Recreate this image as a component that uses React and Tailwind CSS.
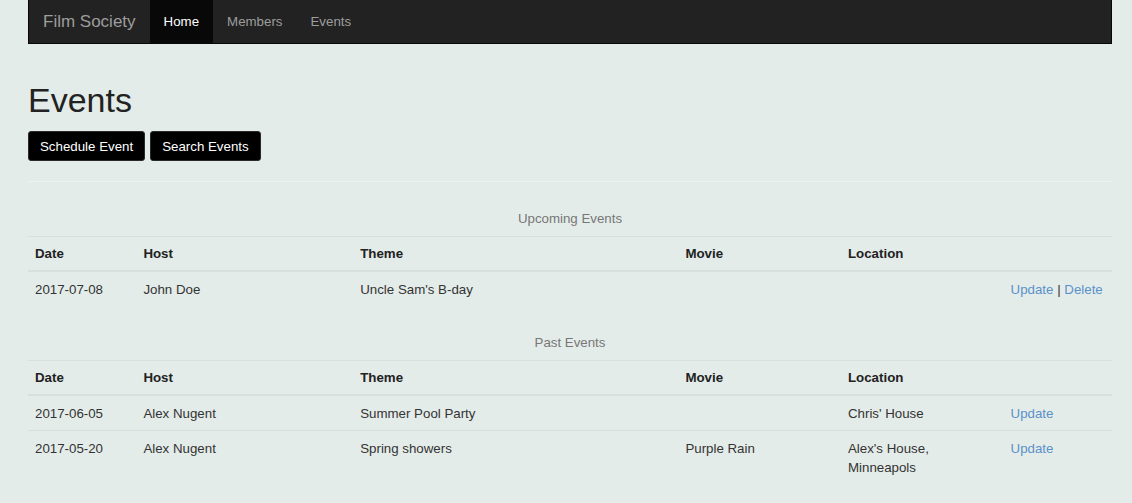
import React from "react";

const upcoming = [
  { date: "2017-07-08", host: "John Doe", theme: "Uncle Sam's B-day", movie: "", location: "", del: true },
];

const past = [
  { date: "2017-06-05", host: "Alex Nugent", theme: "Summer Pool Party", movie: "", location: "Chris' House" },
  { date: "2017-05-20", host: "Alex Nugent", theme: "Spring showers", movie: "Purple Rain", location: "Alex's House, Minneapols" },
];

export default function App() {
  return (
    <div
      className="min-h-[503px] bg-[#e4ece9] text-[#333] text-[13.3px] leading-[19px]"
      style={{ fontFamily: '"Liberation Sans", Arial, sans-serif' }}
    >
      <div className="ml-[28px] w-[1084px]">
        <Navbar />
        <h1 className="mt-[38px] text-[34px] leading-[37px] text-[#222]">Events</h1>
        <div className="mt-[12px] flex gap-[5px]">
          <Button>Schedule Event</Button>
          <Button>Search Events</Button>
        </div>
        <hr className="mt-[20px] mb-[19px] border-0 border-t border-[#eef1ef]" />
        <EventTable caption="Upcoming Events" rows={upcoming} />
        <div className="h-[19px]" />
        <EventTable caption="Past Events" rows={past} />
      </div>
    </div>
  );
}

function Navbar() {
  return (
    <nav className="flex h-[44px] items-stretch bg-[#222] border-x border-b border-[#080808]">
      <a className="flex items-center px-[14px] text-[17px] text-[#9d9d9d]">Film Society</a>
      <a className="flex items-center px-[14px] bg-[#080808] text-white">Home</a>
      <a className="flex items-center px-[14px] text-[#9d9d9d]">Members</a>
      <a className="flex items-center px-[14px] text-[#9d9d9d]">Events</a>
    </nav>
  );
}

function Button({ children }) {
  return (
    <button className="h-[30px] px-[11px] bg-black text-white border border-[#2a2a2a] rounded-[3px]">
      {children}
    </button>
  );
}

function EventTable({ caption, rows }) {
  return (
    <table className="w-full table-fixed border-collapse">
      <caption className="py-[8px] text-[#777]">{caption}</caption>
      <colgroup>
        <col className="w-[10%]" />
        <col className="w-[20%]" />
        <col className="w-[30%]" />
        <col className="w-[15%]" />
        <col className="w-[15%]" />
        <col className="w-[10%]" />
      </colgroup>
      <thead>
        <tr className="text-left">
          {["Date", "Host", "Theme", "Movie", "Location", ""].map((h, i) => (
            <th key={i} className="px-[7px] py-[7px] font-bold text-[#222] border-t border-b-2 border-[#d9dfdc]">
              {h}
            </th>
          ))}
        </tr>
      </thead>
      <tbody>
        {rows.map((r, i) => (
          <tr key={i} className={i > 0 ? "border-t border-[#d9dfdc]" : ""}>
            <td className="px-[7px] py-[7.5px] align-top">{r.date}</td>
            <td className="px-[7px] py-[7.5px] align-top">{r.host}</td>
            <td className="px-[7px] py-[7.5px] align-top">{r.theme}</td>
            <td className="px-[7px] py-[7.5px] align-top">{r.movie}</td>
            <td className="px-[7px] py-[7.5px] align-top">{r.location}</td>
            <td className="px-[7px] py-[7.5px] align-top whitespace-nowrap">
              <a className="text-[#5b91c9]">Update</a>
              {r.del && (
                <>
                  {" | "}
                  <a className="text-[#5b91c9]">Delete</a>
                </>
              )}
            </td>
          </tr>
        ))}
      </tbody>
    </table>
  );
}
